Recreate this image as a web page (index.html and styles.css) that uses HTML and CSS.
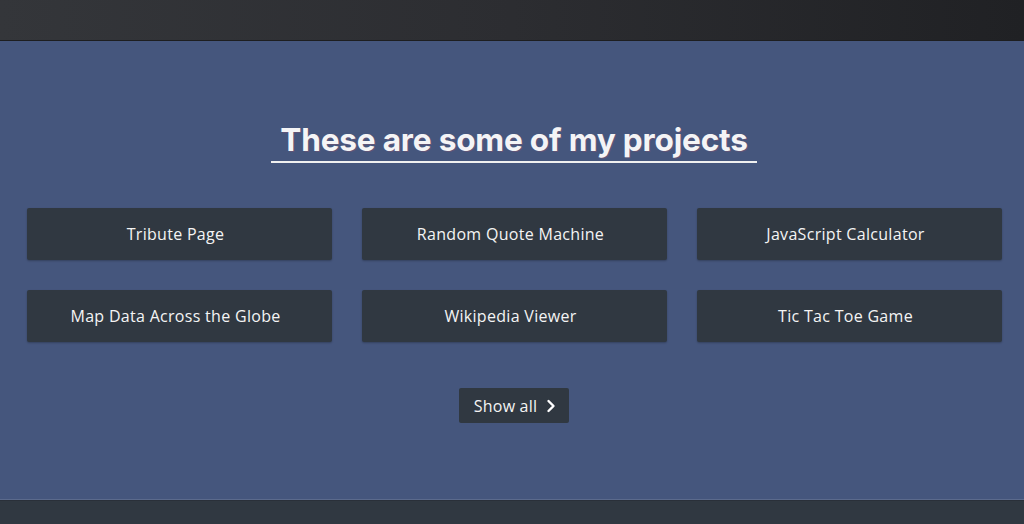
FILE: index.html
```html
<!DOCTYPE html>
<html lang="en">
<head>
<meta charset="utf-8">
<title>Projects</title>
<link rel="stylesheet" href="styles.css">
</head>
<body>
<header class="topbar"></header>
<section class="projects">
  <h2 class="projects-title">These are some of my projects</h2>
  <div class="project-grid">
    <a class="project-tile" href="#">Tribute Page</a>
    <a class="project-tile" href="#">Random Quote Machine</a>
    <a class="project-tile" href="#">JavaScript Calculator</a>
    <a class="project-tile" href="#">Map Data Across the Globe</a>
    <a class="project-tile" href="#">Wikipedia Viewer</a>
    <a class="project-tile" href="#">Tic Tac Toe Game</a>
  </div>
  <a class="show-all" href="#">Show all
    <svg class="chev" viewBox="0 0 10 14" width="10" height="14" aria-hidden="true"><path d="M2.5 2 L7.5 7 L2.5 12" fill="none" stroke="#fff" stroke-width="2.4" stroke-linecap="round" stroke-linejoin="round"/></svg>
  </a>
</section>
<footer class="footer"></footer>
</body>
</html>
```
FILE: styles.css
```css
* { box-sizing: border-box; }
html, body { margin: 0; padding: 0; }
body {
  background: #303841;
  font-family: "Inter", "Lato", sans-serif;
  color: #fff;
  height: 524px;
  overflow: hidden;
}
.topbar {
  height: 41px;
  background: linear-gradient(to right, #34363a, #2c2d31 50%, #202124);
  border-bottom: 1px solid #1d1e20;
}
.projects {
  background: #45567d;
  height: 459px;
  display: flex;
  flex-direction: column;
  align-items: center;
  padding-top: 80px;
  border-bottom: 1px solid #5b6a8c;
}
.projects-title {
  margin: 0 0 0 4px;
  font-family: "Inter", sans-serif;
  font-weight: 700;
  font-size: 31.6px;
  letter-spacing: -0.2px;
  line-height: 38px;
  color: #f4f4f6;
  padding: 0 9px 2px;
  border-bottom: 2px solid #f0f0f0;
  text-shadow: 1px 1px 0 rgba(180, 80, 100, 0.25);
}
.project-grid {
  align-self: flex-start;
  margin-left: 27px;
  margin-top: 45px;
  display: grid;
  grid-template-columns: repeat(3, 305px);
  column-gap: 30px;
  row-gap: 30px;
}
.project-tile {
  height: 52px;
  display: flex;
  align-items: center;
  justify-content: center;
  padding-right: 8px;
  background: #303841;
  border-radius: 2px;
  box-shadow: 0 1px 2px rgba(0,0,0,0.25);
  color: #f4f4f4;
  text-decoration: none;
  font-family: "Open Sans", "Lato", sans-serif;
  font-size: 16px;
  font-weight: 500;
  letter-spacing: 0.3px;
}
.show-all {
  margin-top: 46px;
  margin-left: 4px;
  width: 110px;
  height: 35px;
  display: flex;
  align-items: center;
  justify-content: center;
  gap: 9px;
  padding-left: 2px;
  background: #303841;
  border-radius: 2px;
  color: #f4f4f4;
  text-decoration: none;
  font-family: "Open Sans", "Lato", sans-serif;
  font-size: 16px;
  font-weight: 500;
  letter-spacing: 0.2px;
}
.chev { display: block; }
.footer {
  height: 24px;
  background: #303841;
  border-top: 1px solid #2a3039;
}
```
